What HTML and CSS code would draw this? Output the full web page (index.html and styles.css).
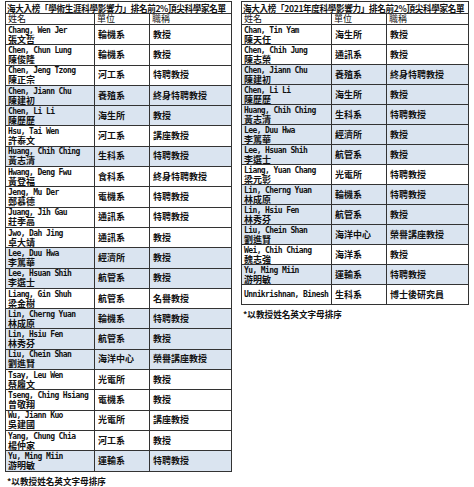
FILE: index.html
```html
<!DOCTYPE html>
<html lang="zh-Hant">
<head>
<meta charset="utf-8">
<link rel="stylesheet" href="styles.css">
</head>
<body>
<div class="page">
  <section class="block block-left">
    <table class="list">
      <colgroup><col class="c1"><col class="c2"><col class="c3"></colgroup>
      <thead>
        <tr class="title"><th colspan="3">海大入榜「學術生涯科學影響力」排名前2%頂尖科學家名單</th></tr>
        <tr class="head"><th>姓名</th><th>單位</th><th>職稱</th></tr>
      </thead>
      <tbody>
        <tr><td class="name"><div class="en">Chang, Wen Jer</div><div class="zh">張文哲</div></td><td>輪機系</td><td>教授</td></tr>
        <tr><td class="name"><div class="en">Chen, Chun Lung</div><div class="zh">陳俊隆</div></td><td>輪機系</td><td>教授</td></tr>
        <tr><td class="name"><div class="en">Chen, Jeng Tzong</div><div class="zh">陳正宗</div></td><td>河工系</td><td>特聘教授</td></tr>
        <tr class="hl"><td class="name"><div class="en">Chen, Jiann Chu</div><div class="zh">陳建初</div></td><td>養殖系</td><td>終身特聘教授</td></tr>
        <tr class="hl"><td class="name"><div class="en">Chen, Li Li</div><div class="zh">陳歷歷</div></td><td>海生所</td><td>教授</td></tr>
        <tr><td class="name"><div class="en">Hsu, Tai Wen</div><div class="zh">許泰文</div></td><td>河工系</td><td>講座教授</td></tr>
        <tr class="hl"><td class="name"><div class="en">Huang, Chih Ching</div><div class="zh">黃志清</div></td><td>生科系</td><td>特聘教授</td></tr>
        <tr><td class="name"><div class="en">Hwang, Deng Fwu</div><div class="zh">黃登福</div></td><td>食科系</td><td>終身特聘教授</td></tr>
        <tr><td class="name"><div class="en">Jeng, Mu Der</div><div class="zh">鄭慕德</div></td><td>電機系</td><td>特聘教授</td></tr>
        <tr><td class="name"><div class="en">Juang, Jih Gau</div><div class="zh">莊季高</div></td><td>通訊系</td><td>特聘教授</td></tr>
        <tr><td class="name"><div class="en">Jwo, Dah Jing</div><div class="zh">卓大靖</div></td><td>通訊系</td><td>教授</td></tr>
        <tr class="hl"><td class="name"><div class="en">Lee, Duu Hwa</div><div class="zh">李篤華</div></td><td>經濟所</td><td>教授</td></tr>
        <tr class="hl"><td class="name"><div class="en">Lee, Hsuan Shih</div><div class="zh">李選士</div></td><td>航管系</td><td>教授</td></tr>
        <tr><td class="name"><div class="en">Liang, Gin Shuh</div><div class="zh">梁金樹</div></td><td>航管系</td><td>名譽教授</td></tr>
        <tr class="hl"><td class="name"><div class="en">Lin, Cherng Yuan</div><div class="zh">林成原</div></td><td>輪機系</td><td>特聘教授</td></tr>
        <tr class="hl"><td class="name"><div class="en">Lin, Hsiu Fen</div><div class="zh">林秀芬</div></td><td>航管系</td><td>教授</td></tr>
        <tr class="hl"><td class="name"><div class="en">Liu, Chein Shan</div><div class="zh">劉進賢</div></td><td>海洋中心</td><td>榮譽講座教授</td></tr>
        <tr><td class="name"><div class="en">Tsay, Leu Wen</div><div class="zh">蔡履文</div></td><td>光電所</td><td>教授</td></tr>
        <tr><td class="name"><div class="en">Tseng, Ching Hsiang</div><div class="zh">曾敬翔</div></td><td>電機系</td><td>教授</td></tr>
        <tr><td class="name"><div class="en">Wu, Jiann Kuo</div><div class="zh">吳建國</div></td><td>光電所</td><td>講座教授</td></tr>
        <tr><td class="name"><div class="en">Yang, Chung Chia</div><div class="zh">楊仲家</div></td><td>河工系</td><td>教授</td></tr>
        <tr class="hl"><td class="name"><div class="en">Yu, Ming Miin</div><div class="zh">游明敏</div></td><td>運輸系</td><td>特聘教授</td></tr>
      </tbody>
    </table>
    <p class="note">*以教授姓名英文字母排序</p>
  </section>

  <section class="block block-right">
    <table class="list">
      <colgroup><col class="c1r"><col class="c2"><col class="c3"></colgroup>
      <thead>
        <tr class="title"><th colspan="3">海大入榜「2021年度科學影響力」排名前2%頂尖科學家名單</th></tr>
        <tr class="head"><th>姓名</th><th>單位</th><th>職稱</th></tr>
      </thead>
      <tbody>
        <tr><td class="name"><div class="en">Chan, Tin Yam</div><div class="zh">陳天任</div></td><td>海生所</td><td>教授</td></tr>
        <tr><td class="name"><div class="en">Chen, Chih Jung</div><div class="zh">陳志榮</div></td><td>通訊系</td><td>教授</td></tr>
        <tr class="hl"><td class="name"><div class="en">Chen, Jiann Chu</div><div class="zh">陳建初</div></td><td>養殖系</td><td>終身特聘教授</td></tr>
        <tr class="hl"><td class="name"><div class="en">Chen, Li Li</div><div class="zh">陳歷歷</div></td><td>海生所</td><td>教授</td></tr>
        <tr class="hl"><td class="name"><div class="en">Huang, Chih Ching</div><div class="zh">黃志清</div></td><td>生科系</td><td>特聘教授</td></tr>
        <tr class="hl"><td class="name"><div class="en">Lee, Duu Hwa</div><div class="zh">李篤華</div></td><td>經濟所</td><td>教授</td></tr>
        <tr class="hl"><td class="name"><div class="en">Lee, Hsuan Shih</div><div class="zh">李選士</div></td><td>航管系</td><td>教授</td></tr>
        <tr><td class="name"><div class="en">Liang, Yuan Chang</div><div class="zh">梁元彰</div></td><td>光電所</td><td>特聘教授</td></tr>
        <tr class="hl"><td class="name"><div class="en">Lin, Cherng Yuan</div><div class="zh">林成原</div></td><td>輪機系</td><td>特聘教授</td></tr>
        <tr class="hl"><td class="name"><div class="en">Lin, Hsiu Fen</div><div class="zh">林秀芬</div></td><td>航管系</td><td>教授</td></tr>
        <tr class="hl"><td class="name"><div class="en">Liu, Chein Shan</div><div class="zh">劉進賢</div></td><td>海洋中心</td><td>榮譽講座教授</td></tr>
        <tr><td class="name"><div class="en">Wei, Chih Chiang</div><div class="zh">魏志強</div></td><td>海洋系</td><td>教授</td></tr>
        <tr class="hl"><td class="name"><div class="en">Yu, Ming Miin</div><div class="zh">游明敏</div></td><td>運輸系</td><td>特聘教授</td></tr>
        <tr><td class="name"><div class="en">Unnikrishnan, Binesh</div></td><td>生科系</td><td>博士後研究員</td></tr>
      </tbody>
    </table>
    <p class="note">*以教授姓名英文字母排序</p>
  </section>
</div>
</body>
</html>
```

FILE: styles.css
```css
html, body {
  margin: 0;
  padding: 0;
  background: #ffffff;
}

.page {
  display: flex;
  align-items: flex-start;
  gap: 10px;
  padding: 1px 0 0 5px;
  color: #111111;
  font-family: "Noto Sans CJK TC", "Noto Sans", sans-serif;
}

.block-left { width: 226px; }
.block-right { width: 227px; }

.list {
  width: 100%;
  table-layout: fixed;
  border-collapse: collapse;
}

.c1 { width: 89px; }
.c1r { width: 90px; }
.c2 { width: 55px; }
.c3 { width: 82px; }

.list th,
.list td {
  border: 1px solid #333333;
  padding: 0 0 0 3px;
  text-align: left;
  vertical-align: middle;
  white-space: nowrap;
  overflow: hidden;
}

.list .title th {
  height: 11px;
  padding-left: 1px;
  font-size: 8.6px;
  line-height: 10px;
  font-weight: 700;
  letter-spacing: -0.35px;
}

.list .head th {
  height: 10px;
  font-size: 9px;
  line-height: 10px;
  font-weight: 400;
  padding-left: 2px;
}

.list td {
  font-size: 9px;
  line-height: 10px;
  font-weight: 700;
}

.block-left .list tbody tr { height: 20.3px; }
.block-right .list tbody tr { height: 20px; }

.list td.name { padding-left: 2px; }

.list tr.hl td { background: #dae4f0; }

.en {
  font-family: "DejaVu Sans Mono", "Liberation Mono", monospace;
  font-size: 8px;
  letter-spacing: -0.6px;
  font-weight: 700;
  line-height: 9px;
}

.zh {
  font-size: 9px;
  line-height: 9px;
  font-weight: 700;
}

.note {
  margin: 4px 0 0 2px;
  font-size: 8.6px;
  line-height: 10px;
  font-weight: 700;
}
```
